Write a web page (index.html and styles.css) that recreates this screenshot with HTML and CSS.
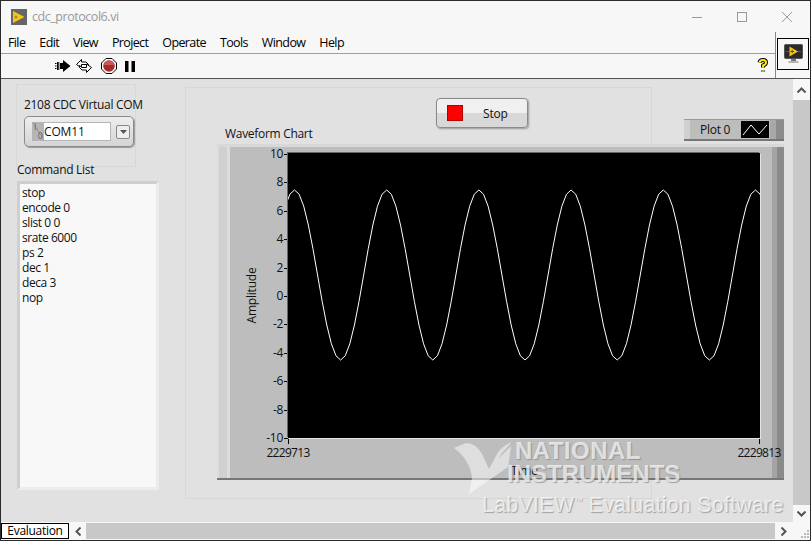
FILE: index.html
```html
<!DOCTYPE html>
<html lang="en">
<head>
<meta charset="utf-8">
<title>cdc_protocol6.vi</title>
<link rel="stylesheet" href="styles.css">
</head>
<body>
<div class="window">
  <header class="titlebar">
    <svg class="app-icon" width="16" height="16" viewBox="0 0 16 16"><rect width="16" height="16" fill="#666"/><path d="M2 2 L13.500 8 L2 14 Z" fill="#f5c518"/><path d="M3.500 8h3M5 6.500v3" stroke="#8a7a30" stroke-width="1" fill="none"/></svg>
    <span class="title">cdc_protocol6.vi</span>
    <div class="win-controls">
      <svg width="12" height="12" viewBox="0 0 12 12"><path d="M1 6.500H11" stroke="#999" fill="none"/></svg>
      <svg width="12" height="12" viewBox="0 0 12 12"><rect x="1.500" y="1.500" width="9" height="9" stroke="#999" fill="none"/></svg>
      <svg width="12" height="12" viewBox="0 0 12 12"><path d="M1 1L11 11M11 1L1 11" stroke="#999" fill="none"/></svg>
    </div>
  </header>
  <div class="bars">
    <div class="bars-main">
      <nav class="menubar">
        <span>File</span><span>Edit</span><span>View</span><span>Project</span><span>Operate</span><span>Tools</span><span>Window</span><span>Help</span>
      </nav>
      <div class="toolbar">
        <svg class="tool-run" width="16" height="14" viewBox="0 0 16 14"><path d="M8 1 L15.500 7 L8 13 V10 H5 V4 H8 Z" fill="#000"/><path d="M0 4.500h1.500M0 7h1.500M0 9.500h1.500M2.500 3v8M3.800 3v8" stroke="#000" stroke-width="1" fill="none"/></svg>
        <svg class="tool-loop" width="16" height="16" viewBox="0 0 16 16"><path d="M.5 6.500 L5.500 1.500 V4 H10 L12.500 6.500 V8.500 L10 6.500 H5.500 V10 Z" fill="#fff" stroke="#000"/><path d="M15.500 9.500 L10.500 14.500 V12 H6 L3.500 9.500 V7.500 L6 9.500 H10.500 V6 Z" fill="#fff" stroke="#000"/></svg>
        <svg class="tool-abort" width="16" height="16" viewBox="0 0 16 16"><path d="M5 .5H11L15.500 5V11L11 15.500H5L.5 11V5Z" fill="#fff" stroke="#000"/><circle cx="8" cy="8" r="5.800" fill="#a92c2c"/><path d="M3 7a5 4.500 0 0 1 10 0" fill="#c85a5a"/></svg>
        <svg class="tool-pause" width="10" height="11" viewBox="0 0 10 11"><path d="M0 0h3.500v11H0zM6.500 0H10v11H6.500z" fill="#000"/></svg>
        <svg class="tool-help" width="12" height="16" viewBox="0 0 12 16"><g fill="none" stroke-linejoin="round"><path d="M2.500 4.500Q3 2 6 2Q9 2 9 4.500Q9 6.500 6 7.500V9.500M6 12.500V13.500" stroke="#000" stroke-width="4"/><path d="M2.500 4.500Q3 2 6 2Q9 2 9 4.500Q9 6.500 6 7.500V9.500M6 12.500V13.500" stroke="#ffee00" stroke-width="2"/></g></svg>
      </div>
    </div>
    <div class="vi-icon-cell">
      <div class="vi-icon">
        <svg width="20" height="21" viewBox="0 0 20 21"><rect x="0.500" y="0.500" width="18" height="14" rx="1" fill="#2a2a2a" stroke="#555"/><path d="M1.500 7.500H17" stroke="#c82020" stroke-width="1"/><path d="M5.500 2.500 L14 7.500 L5.500 12.500 Z" fill="#f5c518"/><path d="M6.500 7.500h3.500M8.200 5.800v3.400" stroke="#6a4a10"/><path d="M7 15h5v2H7z" fill="#777"/><path d="M4.500 17h10v2h-10z" fill="#b5b5b5"/></svg>
      </div>
    </div>
  </div>
  <div class="work">
    <main class="panel">
      <div class="deco deco-com"></div>
      <div class="deco deco-main"></div>

      <label class="lbl lbl-com">2108 CDC Virtual COM</label>
      <div class="ring">
        <div class="ring-field"><span class="ring-io"><i>I</i><i class="ring-io-o">0</i></span><span class="ring-val">COM11</span></div>
        <span class="ring-btn"><svg width="7" height="4" viewBox="0 0 7 4"><path d="M0 0H7L3.500 4Z" fill="#555"/></svg></span>
      </div>

      <label class="lbl lbl-cmd">Command List</label>
      <div class="listbox">
        <div>stop</div><div>encode 0</div><div>slist 0 0</div><div>srate 6000</div><div>ps 2</div><div>dec 1</div><div>deca 3</div><div>nop</div>
      </div>

      <button class="stop"><span class="stop-led"></span><span class="stop-txt">Stop</span></button>

      <label class="lbl lbl-chart">Waveform Chart</label>
      <div class="legend"><span class="legend-name">Plot 0</span><svg class="legend-swatch" width="28" height="17" viewBox="0 0 28 17"><rect width="28" height="17" fill="#000"/><path d="M2 14 L10 4 L18 13 L26 4" stroke="#fff" fill="none"/></svg></div>

      <section class="chart">
        <div class="chart-edge-l"></div>
        <div class="chart-edge-r"></div>
        <div class="yscale">
          <div class="ytick">10</div><div class="ytick">8</div><div class="ytick">6</div><div class="ytick">4</div><div class="ytick">2</div><div class="ytick">0</div><div class="ytick">-2</div><div class="ytick">-4</div><div class="ytick">-6</div><div class="ytick">-8</div><div class="ytick">-10</div>
        </div>
        <div class="ylabel">Amplitude</div>
        <svg class="plot" width="472" height="285" viewBox="0 0 472 285">
          <rect width="472" height="285" fill="#000"/>
          <defs>
            <path id="wave" d="M0 37l4.610 4.200 4.610 12 4.610 18.800 4.610 23.700 4.610 26.300 4.610 26.300 4.610 23.700 4.610 18.800 4.610 12 4.610 4.200 4.610-4.200 4.610-12 4.610-18.800 4.610-23.700 4.610-26.300 4.610-26.300 4.610-23.700 4.610-18.800 4.610-12 4.610-4.200"/>
          </defs>
          <g fill="none" stroke="#fff" stroke-width="1">
            <use href="#wave" x="-85.700"/><use href="#wave" x="6.500"/><use href="#wave" x="98.700"/><use href="#wave" x="190.900"/><use href="#wave" x="283.100"/><use href="#wave" x="375.300"/><use href="#wave" x="467.500"/>
          </g>
        </svg>
        <div class="xtick xtick-l"></div>
        <div class="xtick xtick-r"></div>
        <div class="xnum xnum-l">2229713</div>
        <div class="xnum xnum-r">2229813</div>
        <div class="xlabel">Time</div>
      </section>

      <div class="wm">
        <svg class="wm-logo" width="62" height="58" viewBox="0 0 62 58"><path d="M2 8 L14 3 Q24 3 30 14 L37 29 L45 14 Q50 6 60 2 L50 13 L46 20 L50 15 L59 6 L56 27 L17 54 L20 38 Q18 20 2 8 Z" fill="#fff" fill-opacity=".5"/></svg>
        <div class="wm-ni">NATIONAL</div>
        <div class="wm-ins">INSTRUMENTS</div>
        <div class="wm-lv">LabVIEW<span class="wm-tm">&#8482;</span> Evaluation Software</div>
      </div>
    </main>
    <aside class="vscroll">
      <span class="arrow"><svg width="9" height="6" viewBox="0 0 9 6"><path d="M.5 5.500L4.500 1.500L8.500 5.500" stroke="#555" stroke-width="2" fill="none"/></svg></span>
      <span class="track"></span>
      <span class="arrow"><svg width="9" height="6" viewBox="0 0 9 6"><path d="M.5 .5L4.500 4.500L8.500 .5" stroke="#555" stroke-width="2" fill="none"/></svg></span>
    </aside>
  </div>
  <footer class="hscroll">
    <span class="tab">Evaluation</span>
    <span class="harrow"><svg width="6" height="9" viewBox="0 0 6 9"><path d="M5.500 .5L1.500 4.500L5.500 8.500" stroke="#555" stroke-width="2" fill="none"/></svg></span>
    <span class="htrack"></span>
    <span class="harrow harrow-r"><svg width="6" height="9" viewBox="0 0 6 9"><path d="M.5 .5L4.500 4.500L.5 8.500" stroke="#555" stroke-width="2" fill="none"/></svg></span>
    <span class="grip"><svg width="10" height="10" viewBox="0 0 10 10"><path d="M7 1h2v2H7zM4 4h2v2H4zM7 4h2v2H7zM1 7h2v2H1zM4 7h2v2H4zM7 7h2v2H7z" fill="#bbb"/></svg></span>
  </footer>
</div>
</body>
</html>
```
FILE: styles.css
```css
* { box-sizing: border-box; }
html, body { margin: 0; padding: 0; }
body {
  width: 811px;
  height: 541px;
  overflow: hidden;
  font-family: "Open Sans", "Noto Sans", sans-serif;
  font-size: 12px;
  color: #111;
}
.window {
  width: 811px;
  height: 541px;
  display: flex;
  flex-direction: column;
  border: 1px solid #2b2b2b;
  background: #f7f7f7;
}
.titlebar {
  height: 31px;
  flex: none;
  display: flex;
  align-items: center;
  padding-left: 10px;
}
.app-icon { margin-top: 1px; }
.title {
  margin-left: 5px;
  color: #999;
  font-size: 12.500px;
  letter-spacing: -.45px;
}
.win-controls {
  margin-left: auto;
  display: flex;
  gap: 33px;
  padding-right: 17px;
}
.bars { height: 47px; flex: none; display: flex; border-bottom: 1px solid #555; }
.bars-main { width: 775px; flex: none; display: flex; flex-direction: column; border-right: 1px solid #888; }
.menubar {
  height: 22px;
  flex: none;
  display: flex;
  align-items: center;
  gap: 14px;
  padding-left: 7px;
  border-bottom: 1px solid #a0a0a0;
  font-size: 12.500px;
  letter-spacing: -.62px;
  color: #000;
}
.toolbar { flex: 1; display: flex; align-items: center; padding-left: 54px; }
.tool-loop { margin-left: 5px; }
.tool-abort { margin-left: 9px; }
.tool-pause { margin-left: 8px; }
.tool-help { margin-left: auto; margin-right: 6px; }
.vi-icon-cell { flex: 1; padding: 6px 0 0 1px; }
.vi-icon {
  width: 32px;
  height: 32px;
  border: 1px solid #000;
  display: flex;
  justify-content: center;
  align-items: center;
  padding-left: 2px;
}
.work { flex: 1; display: flex; min-height: 0; }
.panel {
  flex: 1;
  position: relative;
  background: #e1e1e1;
  overflow: hidden;
}
.deco { position: absolute; border: 1px solid #d7d7d7; }
.deco-com { left: 15px; top: 5px; width: 120px; height: 83px; }
.deco-main { left: 184px; top: 8px; width: 467px; height: 412px; }
.lbl { position: absolute; white-space: nowrap; letter-spacing: -.3px; }
.lbl-com { left: 23px; top: 17px; }
.lbl-cmd { left: 16px; top: 82px; }
.lbl-chart { left: 224px; top: 46px; }

.ring {
  position: absolute;
  left: 23px;
  top: 37px;
  width: 110px;
  height: 31px;
  border: 1px solid #8a8a8a;
  border-radius: 5px;
  background: linear-gradient(#eee, #d4d4d4);
  box-shadow: 1px 1px 1px #999;
  display: flex;
  align-items: center;
  padding-left: 7px;
}
.ring-field {
  width: 79px;
  height: 19px;
  background: #fff;
  border: 1px solid #b5b5b5;
  display: flex;
  align-items: center;
}
.ring-io {
  width: 11px;
  height: 17px;
  flex: none;
  background: linear-gradient(to top right, #b5b5b5 48%, #8a8a8a 48%, #8a8a8a 52%, #b5b5b5 52%);
  display: flex;
  flex-direction: column;
  font-size: 9px;
  line-height: 8.500px;
  padding: 0 1px;
  color: #666;
}
.ring-io i { font-style: normal; }
.ring-io .ring-io-o { align-self: flex-end; }
.ring-val { margin-left: 0; letter-spacing: -.15px; }
.ring-btn {
  width: 14px;
  height: 14px;
  margin-left: 5px;
  border: 1px solid #888;
  border-radius: 2px;
  background: #eee;
  display: flex;
  align-items: center;
  justify-content: center;
}
.listbox {
  position: absolute;
  left: 16px;
  top: 102px;
  width: 142px;
  height: 309px;
  background: #f8f8f8;
  border: 3px solid #cfcfcf;
  border-right-color: #ececec;
  border-bottom-color: #ececec;
  padding: 1px 0 0 2px;
  font-size: 12px;
  line-height: 15px;
  letter-spacing: -.42px;
}
.stop {
  position: absolute;
  left: 435px;
  top: 19px;
  width: 92px;
  height: 30px;
  padding: 0;
  border: 1px solid #8a8a8a;
  border-radius: 4px;
  background: linear-gradient(#f0f0f0, #f0f0f0 50%, #d8d8d8 50%, #d8d8d8);
  box-shadow: 1px 1px 2px #999;
  display: flex;
  align-items: center;
  font: inherit;
  color: #111;
}
.stop-led { width: 16px; height: 16px; margin-left: 10px; background: #ff0000; border: 1px solid #b00000; }
.stop-txt { margin-left: 20px; letter-spacing: -.2px; }
.legend {
  position: absolute;
  left: 683px;
  top: 40px;
  width: 100px;
  height: 22px;
  background: linear-gradient(90deg, #d0d0d0 0, #d0d0d0 6px, #bdbdbd 6px, #bdbdbd 86px, #a8a8a8 86px, #a8a8a8 92px, #8c8c8c 92px);
  border-top: 1px solid #999;
  border-bottom: 2px solid #777;
  display: flex;
  align-items: center;
  padding-left: 16px;
}
.legend-name { white-space: nowrap; flex: none; width: 41px; letter-spacing: -.25px; }
.legend-swatch { flex: none; }

.chart {
  position: absolute;
  left: 216px;
  top: 65px;
  width: 567px;
  height: 336px;
  background: #bdbdbd;
  border-top: 3px solid #d8d8d8;
  border-bottom: 2px solid #777;
}
.chart-edge-l {
  position: absolute;
  left: 0;
  top: 0;
  bottom: 0;
  width: 13px;
  background: linear-gradient(90deg, #dcdcdc 0, #dcdcdc 2px, #d0d0d0 2px, #d0d0d0 10px, #dcdcdc 10px);
}
.chart-edge-r {
  position: absolute;
  right: 0;
  top: 0;
  bottom: 0;
  width: 12px;
  background: linear-gradient(90deg, #a4a4a4 0, #a4a4a4 5px, #8a8a8a 5px, #8a8a8a 100%);
}
.yscale {
  position: absolute;
  left: 40px;
  top: 0;
  width: 31px;
  height: 298px;
  display: flex;
  flex-direction: column;
  justify-content: space-between;
}
.ytick {
  height: 14px;
  line-height: 14px;
  text-align: right;
  padding-right: 5px;
  position: relative;
  letter-spacing: -.3px;
}
.ytick::after {
  content: "";
  position: absolute;
  right: 0;
  top: 7px;
  width: 4px;
  height: 1px;
  background: #000;
}
.ylabel {
  position: absolute;
  left: 34px;
  top: 140px;
  transform: translate(-50%, 0) rotate(-90deg);
  white-space: nowrap;
  letter-spacing: -.2px;
}
.plot { position: absolute; left: 71px; top: 6px; display: block; box-shadow: -1px -1px 0 #666, 1px 1px 0 #e4e4e4; }
.xtick { position: absolute; top: 292px; width: 1px; height: 5px; background: #000; }
.xtick-l { left: 71px; }
.xtick-r { left: 542px; }
.xnum { position: absolute; top: 297px; letter-spacing: -.7px; transform: translateX(-50%); }
.xnum-l { left: 71px; }
.xnum-r { left: 542px; }
.xlabel { position: absolute; left: 294px; top: 315px; letter-spacing: -.2px; }

.wm { position: absolute; inset: 0; pointer-events: none; font-family: "Liberation Sans", Arial, sans-serif; color: rgba(255,255,255,.7); text-shadow: 1px 1px 1px rgba(120,120,120,.6); }
.wm-logo { position: absolute; left: 451px; top: 361px; }
.wm-ni, .wm-ins, .wm-lv { position: absolute; white-space: nowrap; }
.wm-ni { left: 514px; top: 358px; font-weight: bold; font-size: 24px; letter-spacing: .45px; }
.wm-ins { left: 506px; top: 381px; font-weight: bold; font-size: 24px; letter-spacing: 0; }
.wm-lv { left: 481px; top: 414px; font-size: 21.500px; letter-spacing: .2px; }
.wm-tm { font-size: 8px; vertical-align: 9px; }

.vscroll {
  width: 17px;
  flex: none;
  display: flex;
  flex-direction: column;
  background: #f7f7f7;
}
.vscroll .arrow { height: 21px; flex: none; display: flex; align-items: center; justify-content: center; }
.vscroll .arrow:last-child { height: 17px; }
.track { flex: 1; background: #c8c8c8; }
.hscroll {
  height: 18px;
  flex: none;
  display: flex;
  align-items: stretch;
  background: #f7f7f7;
  border-top: 1px solid #f7f7f7;
}
.tab {
  width: 68px;
  height: 16px;
  border: 1px solid #000;
  background: #fff;
  line-height: 14px;
  text-align: center;
  letter-spacing: -.3px;
  color: #000;
}
.harrow { width: 17px; flex: none; display: flex; align-items: center; justify-content: center; }
.htrack { flex: 1; background: #c8c8c8; height: 16px; }
.harrow-r { width: 18px; }
.grip { width: 17px; display: flex; align-items: flex-end; justify-content: flex-end; padding: 0 0 1px; }
```
